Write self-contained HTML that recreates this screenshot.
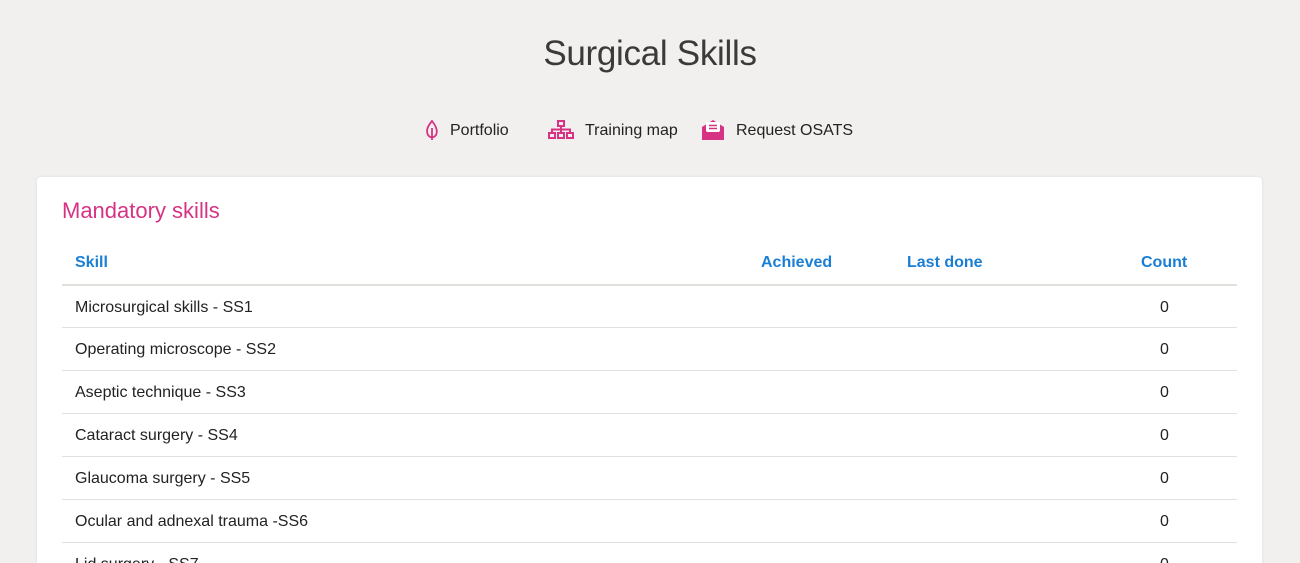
<!DOCTYPE html>
<html><head><style>
html,body{margin:0;height:563px;overflow:hidden}
body{background:#f2f0ee;font-family:"Liberation Sans",sans-serif;color:#222;width:1300px;position:relative}
h1{position:absolute;top:34px;left:0;width:1300px;text-align:center;margin:0;font-weight:normal;font-size:35px;color:#3a3a3a;letter-spacing:-0.3px}
.nav{position:absolute;top:120px;left:0;width:1300px;font-size:16px;color:#222}
.nav span{position:absolute;top:0;line-height:22px}
.nav svg{position:absolute;display:block}
.card{position:absolute;left:37px;top:177px;width:1225px;height:420px;background:#fff;border-radius:4px;box-shadow:0 0 3px rgba(0,0,0,.08)}
.card h2{position:absolute;left:25px;top:21px;margin:0;font-weight:400;font-size:22px;color:#d63384}
.th{position:absolute;top:77px;font-weight:bold;color:#1a7fd4;font-size:16px}
.row{position:absolute;left:25px;width:1175px;height:42px;border-top:1px solid #e2e0dc;font-size:16px}
.row .n{position:absolute;left:13px;top:13px}
.row .c{position:absolute;left:1098px;top:13px}
</style></head><body>
<h1>Surgical Skills</h1>
<div class="nav">
<svg style="left:424px;top:-1px" width="16" height="22" viewBox="0 0 16 22"><path d="M8 2 C3 8 2 12 4 16 C6 19 10 19 12 16 C14 12 12 7 8 2 Z M8 9 V21" fill="none" stroke="#d63384" stroke-width="1.8"/></svg>
<span style="left:450px">Portfolio</span>
<svg style="left:548px;top:0" width="26" height="20" viewBox="0 0 26 20"><g fill="none" stroke="#d63384" stroke-width="2"><rect x="10" y="1" width="6" height="5"/><rect x="1" y="13" width="6" height="5"/><rect x="10" y="13" width="6" height="5"/><rect x="19" y="13" width="6" height="5"/><path d="M13 6V13M4 13V9.5H22V13"/></g></svg>
<span style="left:585px">Training map</span>
<svg style="left:701px;top:-1px" width="24" height="22" viewBox="0 0 24 22"><path d="M1 8 L12 1 L23 8 V21 H1 Z" fill="#d63384"/><rect x="5" y="3" width="14" height="10" fill="#fff"/><path d="M8 6.5H16M8 9.5H16" stroke="#d63384" stroke-width="1.6"/><path d="M1 10 L12 16 L23 10 V21 H1Z" fill="#d63384"/></svg>
<span style="left:736px">Request OSATS</span>
</div>
<div class="card">
<h2>Mandatory skills</h2>
<div class="th" style="left:38px">Skill</div>
<div class="th" style="left:724px">Achieved</div>
<div class="th" style="left:870px">Last done</div>
<div class="th" style="left:1104px">Count</div>
<div class="row" style="top:107px;border-top:2px solid #e2e0dc"><span class="n">Microsurgical skills - SS1</span><span class="c">0</span></div>
<div class="row" style="top:150px"><span class="n">Operating microscope - SS2</span><span class="c">0</span></div>
<div class="row" style="top:193px"><span class="n">Aseptic technique - SS3</span><span class="c">0</span></div>
<div class="row" style="top:236px"><span class="n">Cataract surgery - SS4</span><span class="c">0</span></div>
<div class="row" style="top:279px"><span class="n">Glaucoma surgery - SS5</span><span class="c">0</span></div>
<div class="row" style="top:322px"><span class="n">Ocular and adnexal trauma -SS6</span><span class="c">0</span></div>
<div class="row" style="top:365px"><span class="n">Lid surgery - SS7</span><span class="c">0</span></div>
</div>
</body></html>
